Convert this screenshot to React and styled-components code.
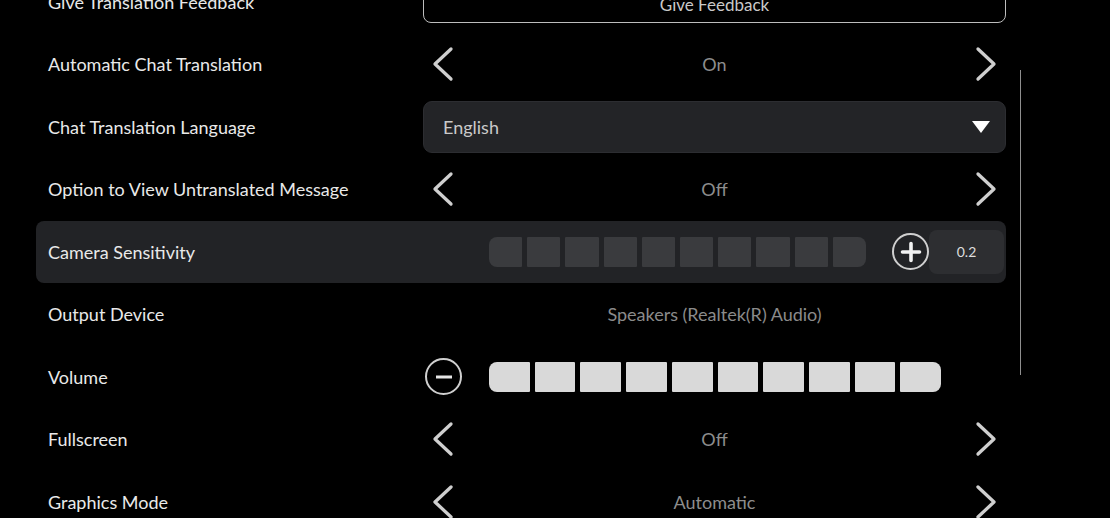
import React from 'react';
import styled, {createGlobalStyle} from 'styled-components';

const GlobalStyle = createGlobalStyle`
  html, body {
    margin: 0;
    padding: 0;
    background: #000;
    overflow: hidden;
  }
  body {
    font-family: 'Lato', 'Noto Sans', sans-serif;
    color: #e8e8e8;
  }
`;

const Screen = styled.div`
  position: relative;
  width: 1110px;
  height: 518px;
  overflow: hidden;
  background: #000;
`;

const List = styled.div`
  display: flex;
  flex-direction: column;
  width: 970px;
  margin: -29.5px 0 0 36px;
`;

const Row = styled.div`
  display: grid;
  grid-template-columns: 375px 583px;
  align-items: center;
  height: 62.5px;
  padding-left: 12px;
  border-radius: 8px;
  background-color: ${({$active}) => $active ? '#222326' : 'transparent'};
`;

const Label = styled.div`
  font-size: 18px;
  color: #e9e9e9;
  white-space: nowrap;
`;

const OutlineButton = styled.button`
  height: 42px;
  width: 100%;
  box-sizing: border-box;
  border: solid 1px #bdbdbd;
  border-radius: 8px;
  background: transparent;
  color: #c9c9c9;
  font-family: inherit;
  font-size: 17px;
  padding-top: 6px;
`;

const Selector = styled.div`
  display: grid;
  grid-template-columns: 40px 1fr 40px;
  align-items: center;
  height: 44px;
`;

const ArrowButton = styled.button`
  display: flex;
  align-items: center;
  justify-content: center;
  height: 44px;
  padding: 0;
  border: none;
  background: transparent;
`;

const Value = styled.div`
  text-align: center;
  font-size: 18px;
  color: #8d8d8d;
`;

const Dropdown = styled.div`
  display: flex;
  align-items: center;
  justify-content: space-between;
  box-sizing: border-box;
  height: 52px;
  padding: 0 15px 0 19px;
  border: solid 1px #2c2d31;
  border-radius: 9px;
  background-color: #232427;
  font-size: 18px;
  color: #cacaca;
`;

const Caret = styled.div`
  width: 0;
  height: 0;
  border-left: 9.5px solid transparent;
  border-right: 9.5px solid transparent;
  border-top: 12px solid #fff;
`;

const Slider = styled.div`
  display: flex;
  align-items: center;
  height: 44px;
  padding-right: 2px;
`;

const MinusSlot = styled.div`
  display: flex;
  align-items: center;
  width: 66px;
  flex-shrink: 0;
  padding-left: 2px;
  box-sizing: border-box;
`;

const Track = styled.div`
  display: flex;
  flex: 1;
  gap: 5px;
  height: 30px;
`;

const Segment = styled.div`
  flex: 1;
  border-radius: 1px;
  background-color: ${({$filled}) => $filled ? '#d9d9d9' : '#3a3b3e'};

  &:first-child {
    border-radius: 8px 1px 1px 8px;
  }
  &:last-child {
    border-radius: 1px 8px 8px 1px;
  }
`;

const PlusSlot = styled.div`
  display: flex;
  align-items: center;
  width: 37px;
  margin-left: 26px;
  flex-shrink: 0;
`;

const RoundButton = styled.button`
  display: flex;
  align-items: center;
  justify-content: center;
  width: 37px;
  height: 37px;
  padding: 0;
  border: solid 2px #cfcfcf;
  border-radius: 50%;
  background: transparent;
  box-sizing: border-box;
`;

const ValueBox = styled.div`
  display: flex;
  align-items: center;
  justify-content: center;
  width: 75px;
  height: 44px;
  flex-shrink: 0;
  border-radius: 8px;
  background-color: #2d2e31;
  font-size: 14px;
  color: #dedede;
`;

const Centered = styled(Value)`
  color: #8b8b8b;
`;

const ScrollBar = styled.div`
  position: absolute;
  left: 1020px;
  top: 70px;
  width: 1px;
  height: 305px;
  background-color: #8f8f8f;
`;

const Chevron = ({dir}) => (
  <svg width="24" height="36" viewBox="0 0 24 36">
    <path
      d={dir === 'left' ? 'M20 3 L4 18 L20 33' : 'M4 3 L20 18 L4 33'}
      fill="none"
      stroke="#cfcfcf"
      strokeWidth="3.3"
      strokeLinecap="round"
      strokeLinejoin="round"
    />
  </svg>
);

const PlusIcon = () => (
  <svg width="22" height="22" viewBox="0 0 22 22">
    <path d="M11 2.5 V19.5 M2.5 11 H19.5" stroke="#f2f2f2" strokeWidth="3.6" strokeLinecap="round" />
  </svg>
);

const MinusIcon = () => (
  <svg width="20" height="20" viewBox="0 0 20 20">
    <path d="M2 10 H18" stroke="#e6e6e6" strokeWidth="3" strokeLinecap="butt" />
  </svg>
);

const Cycle = ({value}) => (
  <Selector>
    <ArrowButton><Chevron dir="left" /></ArrowButton>
    <Value>{value}</Value>
    <ArrowButton><Chevron dir="right" /></ArrowButton>
  </Selector>
);

const Steps = ({filled, showMinus, showPlus, value}) => (
  <Slider>
    <MinusSlot>
      {showMinus ? <RoundButton><MinusIcon /></RoundButton> : null}
    </MinusSlot>
    <Track>
      {Array.from({length: 10}).map((_, i) => (
        <Segment key={i} $filled={i < filled} />
      ))}
    </Track>
    <PlusSlot>
      {showPlus ? <RoundButton><PlusIcon /></RoundButton> : null}
    </PlusSlot>
    {value !== undefined ? <ValueBox>{value}</ValueBox> : null}
  </Slider>
);

const App = () => (
  <Screen>
    <GlobalStyle />
    <List>
      <Row>
        <Label>Give Translation Feedback</Label>
        <OutlineButton>Give Feedback</OutlineButton>
      </Row>
      <Row>
        <Label>Automatic Chat Translation</Label>
        <Cycle value="On" />
      </Row>
      <Row>
        <Label>Chat Translation Language</Label>
        <Dropdown>
          <span>English</span>
          <Caret />
        </Dropdown>
      </Row>
      <Row>
        <Label>Option to View Untranslated Message</Label>
        <Cycle value="Off" />
      </Row>
      <Row $active>
        <Label>Camera Sensitivity</Label>
        <Steps filled={0} showPlus value="0.2" />
      </Row>
      <Row>
        <Label>Output Device</Label>
        <Centered>Speakers (Realtek(R) Audio)</Centered>
      </Row>
      <Row>
        <Label>Volume</Label>
        <Steps filled={10} showMinus />
      </Row>
      <Row>
        <Label>Fullscreen</Label>
        <Cycle value="Off" />
      </Row>
      <Row>
        <Label>Graphics Mode</Label>
        <Cycle value="Automatic" />
      </Row>
    </List>
    <ScrollBar />
  </Screen>
);

export default App;
